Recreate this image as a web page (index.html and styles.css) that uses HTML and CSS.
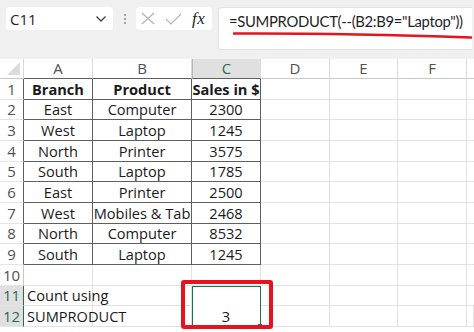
FILE: index.html
```html
<!DOCTYPE html>
<html>
<head>
<meta charset="utf-8">
<link rel="stylesheet" href="styles.css">
</head>
<body>
<div class="app">
  <div class="toolbar">
    <div class="namebox">
      <span class="name">C11</span>
      <svg class="chev" width="12" height="8" viewBox="0 0 12 8"><path d="M1.5 1.5 L6 6 L10.5 1.5" fill="none" stroke="#404040" stroke-width="1.3"/></svg>
    </div>
    <div class="dots"><i></i><i></i><i></i></div>
    <div class="fxbox">
      <svg class="xicon" width="14" height="13" viewBox="0 0 14 13"><path d="M1 1 L13 12 M13 1 L1 12" stroke="#b4b4b4" stroke-width="1.2" fill="none"/></svg>
      <svg class="check" width="17" height="12" viewBox="0 0 17 12"><path d="M1 6 L6 11 L16 1" stroke="#b4b4b4" stroke-width="1.2" fill="none"/></svg>
      <span class="fx">fx</span>
    </div>
    <div class="formula">
      <span class="ftext">=SUMPRODUCT(--(B2:B9="Laptop"))</span>
      <svg class="underline" width="240" height="10" viewBox="0 0 240 10"><path d="M1 2.5 C 60 2.2, 150 3.5, 238 6.5" stroke="#e8121c" stroke-width="2.6" fill="none" stroke-linecap="round"/></svg>
    </div>
  </div>

  <div class="sheet">
    <div class="corner"><span class="tri"></span></div>
    <div class="ch">A</div><div class="ch">B</div><div class="ch ch-sel">C</div><div class="ch">D</div><div class="ch">E</div><div class="ch">F</div><div class="ch ch-end"></div>

    <div class="rh rh-t">1</div><div class="c t b">Branch</div><div class="c t b">Product</div><div class="c t b">Sales in $</div><div class="c"></div><div class="c"></div><div class="c"></div><div class="c"></div>
    <div class="rh rh-t">2</div><div class="c t">East</div><div class="c t">Computer</div><div class="c t">2300</div><div class="c"></div><div class="c"></div><div class="c"></div><div class="c"></div>
    <div class="rh rh-t">3</div><div class="c t">West</div><div class="c t">Laptop</div><div class="c t">1245</div><div class="c"></div><div class="c"></div><div class="c"></div><div class="c"></div>
    <div class="rh rh-t">4</div><div class="c t">North</div><div class="c t">Printer</div><div class="c t">3575</div><div class="c"></div><div class="c"></div><div class="c"></div><div class="c"></div>
    <div class="rh rh-t">5</div><div class="c t">South</div><div class="c t">Laptop</div><div class="c t">1785</div><div class="c"></div><div class="c"></div><div class="c"></div><div class="c"></div>
    <div class="rh rh-t">6</div><div class="c t">East</div><div class="c t">Printer</div><div class="c t">2500</div><div class="c"></div><div class="c"></div><div class="c"></div><div class="c"></div>
    <div class="rh rh-t">7</div><div class="c t">West</div><div class="c t">Mobiles &amp; Tab</div><div class="c t">2468</div><div class="c"></div><div class="c"></div><div class="c"></div><div class="c"></div>
    <div class="rh rh-t">8</div><div class="c t">North</div><div class="c t">Computer</div><div class="c t">8532</div><div class="c"></div><div class="c"></div><div class="c"></div><div class="c"></div>
    <div class="rh rh-t">9</div><div class="c t">South</div><div class="c t">Laptop</div><div class="c t">1245</div><div class="c"></div><div class="c"></div><div class="c"></div><div class="c"></div>
    <div class="rh">10</div><div class="c"></div><div class="c"></div><div class="c"></div><div class="c"></div><div class="c"></div><div class="c"></div><div class="c"></div>
    <div class="rh rh-sel">11</div><div class="c left">Count using</div><div class="c"></div>
    <div class="c merged">3<span class="handle"></span><span class="redbox"></span></div>
    <div class="c"></div><div class="c"></div><div class="c"></div><div class="c"></div>
    <div class="rh rh-sel">12</div><div class="c left">SUMPRODUCT</div><div class="c"></div><div class="c"></div><div class="c"></div><div class="c"></div><div class="c"></div>
  </div>
</div>
</body>
</html>
```

FILE: styles.css
```css
* { box-sizing: border-box; margin: 0; padding: 0; }
html, body { width: 474px; height: 332px; overflow: hidden; background: #ffffff; }
body { font-family: "Open Sans", "Liberation Sans", sans-serif; color: #1a1a1a; }

.app { display: flex; flex-direction: column; }

.toolbar {
  height: 59px;
  background: #f0f0f0;
  display: flex;
  align-items: flex-start;
  padding: 7px 0 0 6px;
}

.namebox {
  width: 107px; height: 23px;
  background: #fff;
  border-radius: 4px;
  display: flex; align-items: center; justify-content: space-between;
  padding: 0 6px 0 4px;
}
.name { font-size: 15px; color: #262626; }
.chev { margin-top: 1px; }

.dots {
  width: 23px; height: 23px;
  display: flex; flex-direction: column; align-items: center; justify-content: center; gap: 2px;
}
.dots i { display: block; width: 2px; height: 2px; background: #8a8a8a; border-radius: 1px; }

.fxbox {
  width: 76px; height: 23px;
  background: #fff;
  border-radius: 4px;
  display: flex; align-items: center;
  padding-left: 5px;
}
.xicon { margin-right: 10px; }
.check { margin-right: 10px; }
.fx { font-family: "Liberation Serif", "DejaVu Serif", serif; font-style: italic; font-size: 17px; color: #222; letter-spacing: 0.5px; }

.formula {
  position: relative;
  margin-left: 6px;
  width: 254px; height: 43px;
  background: #fff;
  border: 1px solid #e2e2e2;
  border-right: none;
  border-radius: 4px 0 0 4px;
  padding: 2px 0 0 10px;
  overflow: hidden;
}
.ftext { font-family: "Lato", "Open Sans", sans-serif; font-size: 14.8px; letter-spacing: -0.3px; color: #1f1f1f; white-space: nowrap; }
.underline { position: absolute; left: 14px; top: 23px; }

.sheet {
  display: grid;
  grid-template-columns: 24px 69px 99px 69px 69px 68px 69px 7px;
  grid-template-rows: 20px repeat(12, 20.67px);
  font-size: 14.6px;
}

.corner { position: relative; background: #fff; border-right: 1px solid #d6d6d6; border-bottom: 1px solid #c8c8c8; }
.tri {
  position: absolute; right: 3px; bottom: 3px;
  width: 0; height: 0;
  border-left: 13px solid transparent;
  border-bottom: 13px solid #dcdcdc;
}
.ch {
  background: #fff;
  border-right: 1px solid #dadada;
  border-bottom: 1px solid #c8c8c8;
  color: #505050;
  font-size: 15px;
  display: flex; align-items: flex-end; justify-content: center;
  line-height: 19px;
}
.ch-sel { background: #e0e0e0; color: #2f6a4c; border-bottom: 1px solid #9dbca9; border-left: 1px solid #b8b8b8; }
.ch-end { border-right: none; }

.rh {
  background: #fff;
  border-right: 1px solid #c8c8c8;
  border-bottom: 1px solid #e4e4e4;
  color: #505050;
  font-size: 15px;
  display: flex; align-items: flex-end; justify-content: center;
  line-height: 19px;
}
.rh-t { border-right-color: #5f5f5f; }
.rh-sel { background: #e0e0e0; color: #2f6a4c; border-right: 1px solid #217346; }

.c {
  border-right: 1px solid #e2e2e2;
  border-bottom: 1px solid #e2e2e2;
  display: flex; align-items: flex-end; justify-content: center;
  line-height: 19px;
  white-space: nowrap;
}
.sheet > .c:nth-child(8n) { border-right: none; }

.t { border-right-color: #5f5f5f; border-bottom-color: #5f5f5f; }
.ch:nth-child(2), .ch:nth-child(3), .ch:nth-child(4) { border-bottom-color: #5f5f5f; }
.b { font-weight: 700; }
.left { justify-content: flex-start; padding-left: 3px; }

.merged {
  grid-row: span 2;
  position: relative;
  outline: 1px solid #217346;
  outline-offset: -1px;
}
.handle {
  position: absolute; right: -2px; bottom: -2px;
  width: 4px; height: 4px; background: #217346;
}
.redbox {
  position: absolute;
  left: -11px; right: -13px; top: -6px; bottom: -3px;
  border: 4px solid #e8121c;
  border-radius: 3px;
  pointer-events: none;
}
```
